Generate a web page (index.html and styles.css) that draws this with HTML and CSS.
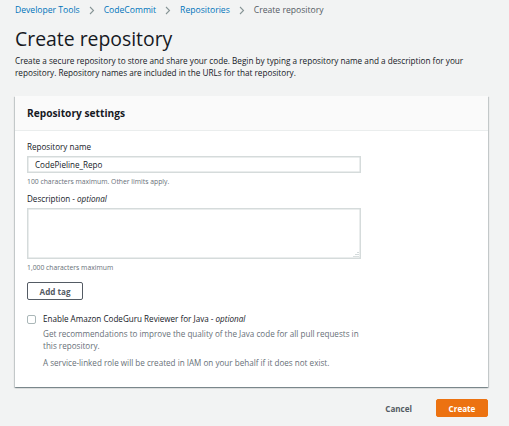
FILE: index.html
```html
<!DOCTYPE html>
<html>
<head>
<meta charset="utf-8">
<link rel="stylesheet" href="styles.css">
</head>
<body>
<div class="page">
  <nav class="crumbs">
    <a class="crumb-link">Developer Tools</a>
    <span class="sep"><svg width="6" height="9" viewBox="0 0 6 9"><path d="M1 1l3.5 3.5L1 8" fill="none" stroke="#879596" stroke-width="1.1"/></svg></span>
    <a class="crumb-link">CodeCommit</a>
    <span class="sep"><svg width="6" height="9" viewBox="0 0 6 9"><path d="M1 1l3.5 3.5L1 8" fill="none" stroke="#879596" stroke-width="1.1"/></svg></span>
    <a class="crumb-link">Repositories</a>
    <span class="sep"><svg width="6" height="9" viewBox="0 0 6 9"><path d="M1 1l3.5 3.5L1 8" fill="none" stroke="#879596" stroke-width="1.1"/></svg></span>
    <span class="crumb-current">Create repository</span>
  </nav>
  <h1 class="title">Create repository</h1>
  <p class="intro">Create a secure repository to store and share your code. Begin by typing a repository name and a description for your repository. Repository names are included in the URLs for that repository.</p>

  <section class="card">
    <header class="card-head">Repository settings</header>
    <div class="card-body">
      <div class="field">
        <label class="label">Repository name</label>
        <div class="input">CodePieline_Repo</div>
        <div class="hint">100 characters maximum. Other limits apply.</div>
      </div>
      <div class="field">
        <label class="label">Description - <i>optional</i></label>
        <div class="textarea">
          <svg class="grip" width="6" height="6" viewBox="0 0 6 6"><path d="M5 1v1M3 3v1M5 3v1M1 5v0.9M3 5v0.9M5 5v0.9" stroke="#aab7b8" stroke-width="1"/></svg>
        </div>
        <div class="hint">1,000 characters maximum</div>
      </div>
      <button class="btn-secondary">Add tag</button>
      <div class="check-row">
        <span class="checkbox"></span>
        <div class="check-text">
          <div class="check-label">Enable Amazon CodeGuru Reviewer for Java - <i>optional</i></div>
          <p class="check-desc">Get recommendations to improve the quality of the Java code for all pull requests in this repository.</p>
          <p class="check-desc">A service-linked role will be created in IAM on your behalf if it does not exist.</p>
        </div>
      </div>
    </div>
  </section>

  <div class="actions">
    <button class="btn-link">Cancel</button>
    <button class="btn-primary">Create</button>
  </div>
</div>
</body>
</html>
```

FILE: styles.css
```css
html, body {
  margin: 0;
  padding: 0;
  background: #f2f3f3;
}
body {
  font-family: "Open Sans", "Noto Sans", sans-serif;
  color: #16191f;
}
.page {
  padding: 4px 21px 0 15px;
}
.crumbs {
  display: flex;
  align-items: center;
  gap: 7px;
  font-size: 8.6px;
  height: 12px;
}
.crumb-link {
  color: #0073bb;
}
.crumb-current {
  color: #545b64;
}
.sep {
  display: flex;
  align-items: center;
  padding: 0 2px;
}
.title {
  font-size: 19.4px;
  font-weight: 400;
  margin: 11px 0 4px;
  line-height: 24px;
}
.intro {
  font-size: 8.2px;
  line-height: 12px;
  margin: 0 0 17px;
  width: 470px;
}
.card {
  background: #fff;
  box-shadow: 0 1px 1px 0 rgba(0,28,36,.3), 1px 1px 1px 0 rgba(0,28,36,.15), -1px 1px 1px 0 rgba(0,28,36,.15);
}
.card-head {
  background: #fafafa;
  border-bottom: 1px solid #eaeded;
  font-weight: 700;
  font-size: 10.2px;
  height: 34px;
  line-height: 34px;
  padding: 0 12px;
}
.card-body {
  padding: 10px 12px 18px;
}
.field {
  margin-bottom: 6px;
}
.label {
  display: block;
  font-size: 8.1px;
  line-height: 12px;
  margin-bottom: 3px;
}
.input {
  width: 318px;
  height: 15px;
  border: 1px solid #d5dbdb;
  padding: 0 7px;
  font-size: 8.1px;
  line-height: 15px;
  box-shadow: inset 0 0 0 0.5px #d5dbdb;
}
.textarea {
  position: relative;
  width: 332px;
  height: 49px;
  border: 1px solid #d5dbdb;
  box-shadow: inset 0 0 0 0.5px #d5dbdb;
}
.grip {
  position: absolute;
  right: 1px;
  bottom: 1px;
}
.hint {
  font-size: 6.8px;
  color: #687078;
  line-height: 10px;
  margin-top: 4px;
}
.btn-secondary {
  display: block;
  width: 56px;
  height: 18px;
  margin-top: 9px;
  border: 1px solid #545b64;
  border-radius: 2px;
  background: #fff;
  font-family: inherit;
  font-weight: 700;
  font-size: 8.1px;
  color: #545b64;
  padding: 0;
}
.check-row {
  display: flex;
  gap: 7px;
  margin-top: 13px;
}
.checkbox {
  width: 7px;
  height: 7px;
  border: 1px solid #aab7b8;
  border-radius: 2px;
  margin-top: 2px;
  flex: none;
}
.check-label {
  font-size: 8.1px;
  line-height: 12px;
}
.check-desc {
  font-size: 8.1px;
  line-height: 12px;
  color: #687078;
  margin: 3px 0 0;
  width: 330px;
}
.check-desc + .check-desc {
  margin-top: 5px;
}
.actions {
  display: flex;
  justify-content: flex-end;
  align-items: center;
  gap: 24px;
  margin-top: 12px;
}
.btn-link {
  border: none;
  background: none;
  font-family: inherit;
  font-weight: 700;
  font-size: 8.1px;
  color: #545b64;
  padding: 0;
}
.btn-primary {
  width: 52px;
  height: 18px;
  background: #ec7211;
  border: 1px solid #ec7211;
  border-radius: 2px;
  color: #fff;
  font-family: inherit;
  font-weight: 700;
  font-size: 8.1px;
  padding: 0;
}
```
